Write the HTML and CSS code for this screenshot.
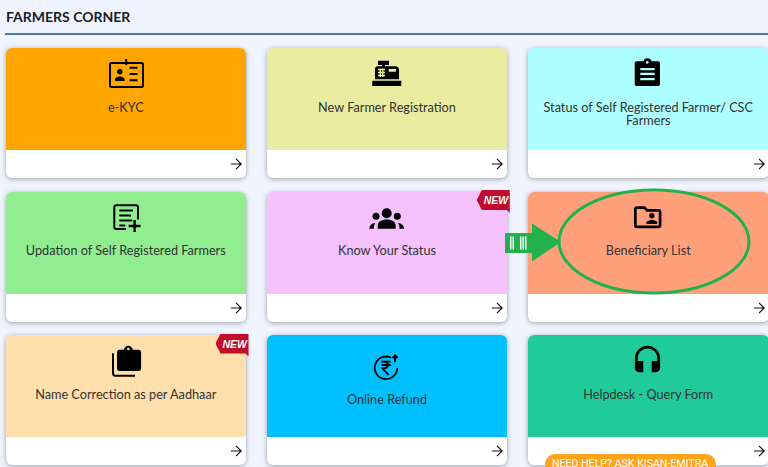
FILE: index.html
```html
<!DOCTYPE html>
<html lang="en">
<head>
<meta charset="utf-8">
<title>Farmers Corner</title>
<link rel="stylesheet" href="styles.css">
</head>
<body>
<main class="page">
  <header class="heading"><h1>FARMERS CORNER</h1></header>
  <section class="grid">
    <article class="card">
      <div class="card-body orange">
        <svg class="icon" viewBox="0 0 48 48"><rect x="8" y="12" width="33" height="24" rx="1.5" fill="none" stroke="#000" stroke-width="2"/><path d="M24.2 8v6M27.5 16.7h8M27.5 23h8M27.5 29.3h8" stroke="#000" stroke-width="2" fill="none"/><circle cx="17.8" cy="20.7" r="2.7"/><path d="M13 30v-1.5c0-2 3-3 4.8-3s4.8 1 4.8 3V30z"/></svg>
        <p>e-KYC</p>
      </div>
      <div class="card-foot"><svg class="arrow" viewBox="0 0 14 14"><path d="M1 7h12M7 1l6 6-6 6"/></svg></div>
    </article>
    <article class="card">
      <div class="card-body khaki">
        <svg class="icon" viewBox="0 0 48 48"><path fill-rule="evenodd" d="M15 9.700h11V14h-4v1.300h10.500c2 0 3.500 1.500 3.500 3.500V28.300H12V18c0-1.500 1-2.700 3-2.700h4V14h-4zM25.700 18v2.700H33V18zM9.300 29.700h29V35h-29z"/><path d="M15 18.500h7M15 21.500h7M15 24.500h7M17.300 17.500v8.500M19.700 17.500v8.500" stroke="#eaec9f" stroke-width="1.400"/></svg>
        <p>New Farmer Registration</p>
      </div>
      <div class="card-foot"><svg class="arrow" viewBox="0 0 14 14"><path d="M1 7h12M7 1l6 6-6 6"/></svg></div>
    </article>
    <article class="card">
      <div class="card-body cyan">
        <svg class="icon" viewBox="0 0 48 48"><path fill-rule="evenodd" d="M12.700 10.300h6.600c.6-1.800 2.200-3 4.200-3s3.600 1.200 4.200 3H34c1.200 0 2 .8 2 2V33c0 1.200-.8 2-2 2H12.700c-1.200 0-2-.8-2-2V12.300c0-1.200.8-2 2-2zM23.300 10a1.400 1.400 0 1 0 .01 0zM16.300 17v2.200h14.400V17zM16.300 21.700v2.200h14.400v-2.200zM16.300 27v2.200h14.400V27z"/></svg>
        <p>Status of Self Registered Farmer/ CSC Farmers</p>
      </div>
      <div class="card-foot"><svg class="arrow" viewBox="0 0 14 14"><path d="M1 7h12M7 1l6 6-6 6"/></svg></div>
    </article>
    <article class="card">
      <div class="card-body green">
        <svg class="icon" viewBox="0 0 48 48"><path d="M36 24.500V12.300c0-1.300-1-2-2-2H14.300c-1.200 0-2 .8-2 2V32c0 1.300.8 2 2 2H24" fill="none" stroke="#000" stroke-width="2"/><path d="M17.300 15.500H31M17.300 20.500H29M17.300 25.500h13M17.300 30.500h6" fill="none" stroke="#000" stroke-width="1.800"/><path d="M26.600 31h12M32.600 25v12" fill="none" stroke="#000" stroke-width="2.400"/></svg>
        <p>Updation of Self Registered Farmers</p>
      </div>
      <div class="card-foot"><svg class="arrow" viewBox="0 0 14 14"><path d="M1 7h12M7 1l6 6-6 6"/></svg></div>
    </article>
    <article class="card">
      <span class="ribbon">NEW</span>
      <div class="card-body pink">
        <svg class="icon" viewBox="0 0 48 48"><circle cx="23.700" cy="18.200" r="5"/><circle cx="13" cy="21.200" r="3.500"/><circle cx="34.300" cy="21.200" r="3.500"/><path d="M14.700 33.800v-3c0-4 4-6.200 9-6.200s9 2.200 9 6.200v3zM6.300 33.800c0-3 2-5.500 6-5.800-1 1.500-1.500 3-1.500 5.800zM41 33.800c0-3-2-5.500-6-5.800 1 1.500 1.500 3 1.500 5.800z"/></svg>
        <p>Know Your Status</p>
      </div>
      <div class="card-foot"><svg class="arrow" viewBox="0 0 14 14"><path d="M1 7h12M7 1l6 6-6 6"/></svg></div>
    </article>
    <article class="card">
      <div class="card-body salmon">
        <svg class="icon" viewBox="0 0 48 48"><g transform="translate(7.200 5.700) scale(1.375)"><path d="M20 6h-8l-2-2H4c-1.100 0-1.990.9-1.990 2L2 18c0 1.100.9 2 2 2h16c1.100 0 2-.9 2-2V8c0-1.100-.9-2-2-2zm0 12H4V6h5.170l2 2H20v10zm-5-5c1.100 0 2-.9 2-2s-.9-2-2-2-2 .9-2 2 .9 2 2 2zm-4 4h8v-1c0-1.330-2.670-2-4-2s-4 .67-4 2v1z"/></g></svg>
        <p>Beneficiary List</p>
      </div>
      <div class="card-foot"><svg class="arrow" viewBox="0 0 14 14"><path d="M1 7h12M7 1l6 6-6 6"/></svg></div>
    </article>
    <article class="card">
      <span class="ribbon">NEW</span>
      <div class="card-body peach">
        <svg class="icon" viewBox="0 0 48 48"><path d="M11 15.300V35c0 1.500.8 2.700 2.300 2.700H33" fill="none" stroke="#000" stroke-width="2"/><path fill-rule="evenodd" d="M17.500 11.700h4.300c.5-2.300 2-4 4.500-4s4 1.700 4.500 4h5.800c1.500 0 2.500 1 2.500 2.500V30.500c0 1.500-1 2.500-2.500 2.500H17.500c-1.500 0-2.500-1-2.500-2.500V14.200c0-1.500 1-2.500 2.500-2.500zM26.300 9.700a1.300 1.300 0 1 0 .01 0z"/></svg>
        <p>Name Correction as per Aadhaar</p>
      </div>
      <div class="card-foot"><svg class="arrow" viewBox="0 0 14 14"><path d="M1 7h12M7 1l6 6-6 6"/></svg></div>
    </article>
    <article class="card">
      <div class="card-body sky">
        <svg class="icon" viewBox="0 0 48 48"><path d="M28 19.700a11.300 11.300 0 1 0 6.300 10.600" fill="none" stroke="#000" stroke-width="1.800"/><path d="M32 24v-6M29.600 20l2.400-2.800 2.400 2.800" fill="none" stroke="#000" stroke-width="2"/><path d="M18.300 23.700h9.400M18.300 27h9.400M18.500 23.700h1.800c3.500 0 4.500 1.800 4.500 3.300s-1.500 3.300-5.300 3.300l6 6.500" fill="none" stroke="#000" stroke-width="1.800"/></svg>
        <p class="lower">Online Refund</p>
      </div>
      <div class="card-foot"><svg class="arrow" viewBox="0 0 14 14"><path d="M1 7h12M7 1l6 6-6 6"/></svg></div>
    </article>
    <article class="card">
      <div class="card-body teal">
        <svg class="icon" viewBox="0 0 48 48"><g transform="translate(6.700 6.300) scale(1.400)"><path d="M12 1c-4.970 0-9 4.030-9 9v7c0 1.660 1.340 3 3 3h3v-8H5v-2c0-3.870 3.130-7 7-7s7 3.130 7 7v2h-4v8h3c1.660 0 3-1.340 3-3v-7c0-4.970-4.030-9-9-9z"/></g></svg>
        <p>Helpdesk - Query Form</p>
      </div>
      <div class="card-foot"><svg class="arrow" viewBox="0 0 14 14"><path d="M1 7h12M7 1l6 6-6 6"/></svg></div>
      <div class="chip">NEED HELP? ASK KISAN-EMITRA</div>
    </article>
  </section>
  <svg class="callout" viewBox="0 0 768 467">
    <ellipse cx="654" cy="241.500" rx="95" ry="51.500" fill="none" stroke="#22b14c" stroke-width="3"/>
    <path d="M505 233h27v-9.500l29 18.500-29 19.500V253h-27z" fill="#22b14c"/>
    <path d="M510 236.500h1.500v13H510zM512.500 236.500h1.500v13h-1.500zM520 236.500h1.500v13H520zM522.500 236.500h1.500v13h-1.500zM525 236.500h1.500v13H525z" fill="#fff"/>
  </svg>
</main>
</body>
</html>
```
FILE: styles.css
```css
* { box-sizing: border-box; }
html, body { margin: 0; height: 467px; overflow: hidden; }
body { background: #f0f4ff; font-family: "Lato", "Liberation Sans", sans-serif; color: #1c1c1c; }
.page { position: relative; height: 467px; overflow: hidden; }
.heading { margin-left: 5px; height: 35px; border-bottom: 2px solid #4f74a8; padding-top: 8px; }
.heading h1 { margin: 0 0 0 1px; font-size: 14px; line-height: 17px; font-weight: 700; color: #16202c; }
.grid { display: grid; grid-template-columns: repeat(3, 240.5px); gap: 13.5px 20.75px; padding: 13px 0 0 5.5px; }
.card { position: relative; height: 130px; border-radius: 6px; background: #fff; box-shadow: 0 1px 5px rgba(0, 0, 0, .35); display: flex; flex-direction: column; }
.card-body { height: 102px; padding: 3px 8px 0; border-radius: 6px 6px 0 0; display: flex; flex-direction: column; align-items: center; }
.card-body p { margin: 1.5px 0 0; font-size: 12.7px; line-height: 13px; text-align: center; color: #333; }
.card-body p.lower { margin-top: 6.5px; }
.icon { width: 48px; height: 48px; flex: none; }
.card-foot { height: 28px; display: flex; align-items: center; justify-content: flex-end; padding-right: 4px; }
.arrow { width: 12px; height: 12px; fill: none; stroke: #111; stroke-width: 1.4; }
.orange { background: #ffa500; }
.khaki { background: #eaec9f; }
.cyan { background: #aeffff; }
.green { background: #90ee90; }
.pink { background: #f5c2ff; }
.salmon { background: #ffa07a; }
.peach { background: #ffe0ac; }
.sky { background: #00bfff; }
.teal { background: #21cb99; }
.ribbon { position: absolute; top: -1.5px; right: -2.5px; width: 33px; height: 23px; padding: 3px 0 0 7px; background: #c00d2a; clip-path: polygon(5px 0, 100% 0, 100% 100%, 30px 20px, 5px 20px, 0 10px); color: #fff; font-family: "Liberation Sans", sans-serif; font-size: 10.5px; line-height: 14px; font-weight: 700; font-style: italic; }
.chip { position: absolute; left: 16.5px; top: 119px; width: 171px; height: 24px; border-radius: 10px; background: #ffa41c; color: #fff; font-family: "Roboto", "Liberation Sans", sans-serif; font-size: 10.6px; line-height: 19px; text-align: center; white-space: nowrap; }
.callout { position: absolute; left: 0; top: 0; width: 768px; height: 467px; pointer-events: none; }
```
